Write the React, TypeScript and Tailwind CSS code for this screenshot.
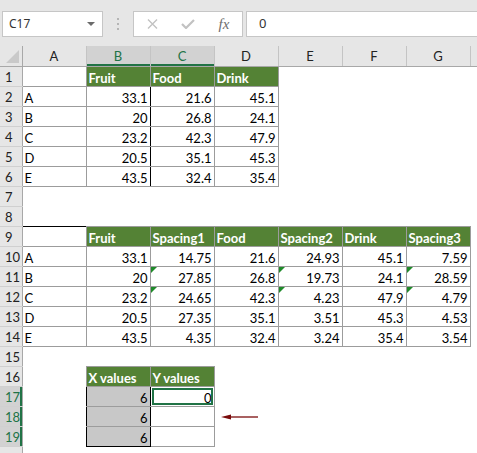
import clsx from 'clsx';

type Kind = 'e' | 'b' | 'n' | 'h';

interface Cell {
  v?: string;
  k: Kind;
  x?: string;
  mark?: boolean;
  active?: boolean;
  arrow?: boolean;
}

const E: Cell = { k: 'e' };
const t = (v: string, x?: string): Cell => ({ v, k: 'b', x });
const n = (v: string, x?: string, mark?: boolean): Cell => ({ v, k: 'n', x, mark });
const h = (v: string): Cell => ({ v, k: 'h' });
const blank: Cell[] = [E, E, E, E, E, E, E];

const BR = 'border-r-black';
const XV = 'bg-[#c8c8c8] border-l-black border-r-black';

const cols = ['A', 'B', 'C', 'D', 'E', 'F', 'G'];

const rows: Cell[][] = [
  [t(''), h('Fruit'), h('Food'), h('Drink'), E, E, E],
  [t('A'), n('33.1', BR), n('21.6'), n('45.1'), E, E, E],
  [t('B'), n('20', BR), n('26.8'), n('24.1'), E, E, E],
  [t('C'), n('23.2', BR), n('42.3'), n('47.9'), E, E, E],
  [t('D'), n('20.5', BR), n('35.1'), n('45.3'), E, E, E],
  [t('E'), n('43.5', BR), n('32.4'), n('35.4'), E, E, E],
  blank,
  blank,
  [t('', 'border-t-black'), h('Fruit'), h('Spacing1'), h('Food'), h('Spacing2'), h('Drink'), h('Spacing3')],
  [t('A'), n('33.1'), n('14.75'), n('21.6'), n('24.93'), n('45.1'), n('7.59')],
  [t('B'), n('20'), n('27.85', '', true), n('26.8'), n('19.73', '', true), n('24.1'), n('28.59', '', true)],
  [t('C'), n('23.2'), n('24.65', '', true), n('42.3'), n('4.23', '', true), n('47.9'), n('4.79', '', true)],
  [t('D'), n('20.5'), n('27.35'), n('35.1'), n('3.51'), n('45.3'), n('4.53')],
  [t('E'), n('43.5'), n('4.35'), n('32.4'), n('3.24'), n('35.4'), n('3.54')],
  blank,
  [E, h('X values'), h('Y values'), E, E, E, E],
  [E, n('6', XV), { v: '0', k: 'n', active: true }, E, E, E, E],
  [E, n('6', XV), n(''), { k: 'e', arrow: true }, E, E, E],
  [E, n('6', XV + ' border-b-black'), n(''), E, E, E, E],
  blank,
];

function DataCell({ c }: { c: Cell }) {
  return (
    <td
      className={clsx(
        'relative h-5 overflow-hidden p-0 align-bottom text-[13px] leading-[16px] whitespace-nowrap text-black',
        c.k !== 'e' && 'border border-[#9c9c9c]',
        c.k === 'h' && 'bg-[#548235] pl-[2px] text-left font-bold text-white',
        c.k === 'b' && 'pl-[2px] text-left',
        c.k === 'n' && 'pr-[2px] text-right',
        c.x,
      )}
    >
      {c.mark && (
        <svg className="absolute top-0 left-0" width="6" height="6" viewBox="0 0 6 6">
          <polygon points="0,0 6,0 0,6" fill="#1f8a2a" />
        </svg>
      )}
      {c.active && <div className="absolute inset-px border-2 border-[#217346]" />}
      {c.arrow && (
        <svg className="mb-[5px] ml-[6px] block" width="38" height="8" viewBox="0 0 38 8">
          <line x1="6" y1="4" x2="37" y2="4" stroke="#7a0c0c" strokeWidth="1.3" />
          <polygon points="0,4 10,1.5 10,6.5" fill="#7a0c0c" />
        </svg>
      )}
      {c.v}
    </td>
  );
}

function FormulaBar() {
  return (
    <div className="flex h-[46px] items-start overflow-hidden bg-[#e6e6e6] pt-[11px] pl-[2px] font-['Noto_Sans',sans-serif]">
      <div className="flex h-[26px] w-[101px] shrink-0 items-center justify-between border border-[#c6c6c6] bg-white pr-[7px] pl-[6px]">
        <span className="text-[12px] text-[#333]">C17</span>
        <svg width="8" height="4" viewBox="0 0 8 4">
          <polygon points="0,0 8,0 4,4" fill="#6b6b6b" />
        </svg>
      </div>
      <div className="flex w-[30px] shrink-0 flex-col items-center gap-[3px] pt-[7px]">
        <span className="h-[2px] w-[2px] bg-[#b5b5b5]" />
        <span className="h-[2px] w-[2px] bg-[#b5b5b5]" />
        <span className="h-[2px] w-[2px] bg-[#b5b5b5]" />
      </div>
      <div className="flex h-[26px] w-[110px] shrink-0 items-center border border-[#c6c6c6] bg-white">
        <div className="flex w-[36px] justify-center">
          <svg width="11" height="10" viewBox="0 0 11 10">
            <path d="M1 0.5 L10 9.5 M10 0.5 L1 9.5" stroke="#c2c2c2" strokeWidth="1.4" fill="none" />
          </svg>
        </div>
        <div className="flex w-[36px] justify-center">
          <svg width="14" height="10" viewBox="0 0 14 10">
            <path d="M1 5 L5 9 L13 1" stroke="#c2c2c2" strokeWidth="2.2" fill="none" />
          </svg>
        </div>
        <div className="flex w-[36px] justify-center">
          <span className="font-['Liberation_Serif',serif] text-[15px] leading-none text-[#6e6e6e] italic">fx</span>
        </div>
      </div>
      <div className="ml-[3px] flex h-[26px] w-[240px] shrink-0 items-center border border-[#c6c6c6] bg-white pl-[12px] text-[13px] text-[#333]">
        0
      </div>
    </div>
  );
}

export default function App() {
  return (
    <div className="h-[453px] w-[477px] overflow-hidden bg-white font-['Lato',sans-serif]">
      <FormulaBar />
      <table className="w-[478px] table-fixed border-collapse">
        <colgroup>
          <col className="w-[22px]" />
          {cols.map((l) => (
            <col key={l} className="w-[64px]" />
          ))}
          <col />
        </colgroup>
        <thead>
          <tr className="h-5">
            <th className="relative border-r border-b border-[#a8a8a8] bg-[#e6e6e6] p-0">
              <svg className="absolute right-[3px] bottom-[3px]" width="13" height="13" viewBox="0 0 13 13">
                <polygon points="13,0 13,13 0,13" fill="#c9c9c9" />
              </svg>
            </th>
            {cols.map((l, i) => (
              <th
                key={l}
                className={clsx(
                  'border-r border-b border-r-[#c4c4c4] border-b-[#a8a8a8] p-0 text-center text-[13px] leading-[16px] font-normal',
                  i === 1 || i === 2
                    ? 'bg-[#d2d2d2] text-[#217346] shadow-[inset_0_-2px_0_#217346]'
                    : 'bg-[#e6e6e6] text-[#222]',
                )}
              >
                {l}
              </th>
            ))}
            <th className="border-b border-[#a8a8a8] bg-[#e6e6e6] p-0" />
          </tr>
        </thead>
        <tbody>
          {rows.map((r, ri) => {
            const num = ri + 1;
            const sel = num >= 17 && num <= 19;
            return (
              <tr key={num} className="h-5">
                <th
                  className={clsx(
                    'border-r border-b border-r-[#a8a8a8] border-b-[#d0d0d0] p-0 pl-[5px] text-left align-bottom text-[13px] leading-[17px] font-normal',
                    sel
                      ? 'bg-[#d2d2d2] text-[#217346] shadow-[inset_-2px_0_0_#217346]'
                      : 'bg-[#e6e6e6] text-[#222]',
                  )}
                >
                  {num < 20 ? num : ''}
                </th>
                {r.map((c, ci) => (
                  <DataCell key={ci} c={c} />
                ))}
                <td className="p-0" />
              </tr>
            );
          })}
        </tbody>
      </table>
    </div>
  );
}
